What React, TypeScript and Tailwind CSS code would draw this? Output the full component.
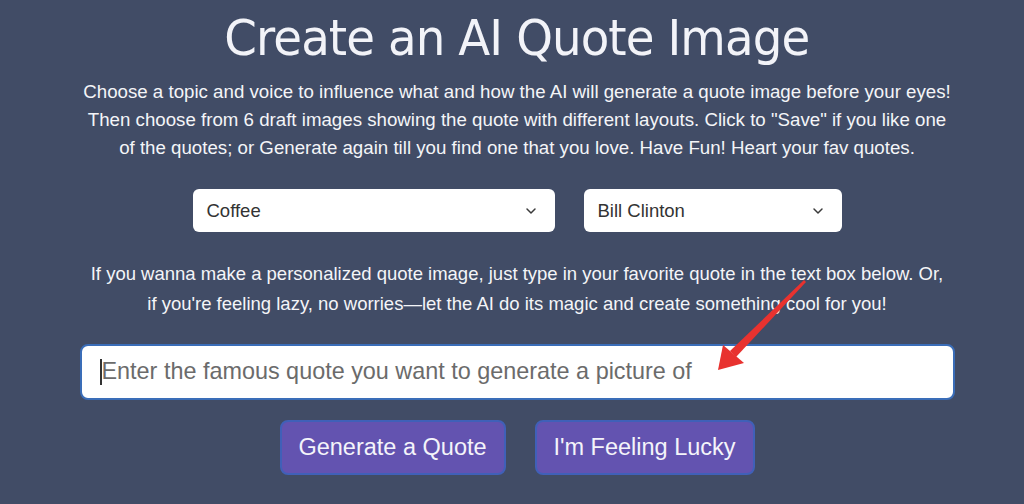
import React from "react";

function Chevron() {
  return (
    <svg width="16" height="16" viewBox="0 0 24 24" fill="none" stroke="#3a3a3a" strokeWidth="2.2" strokeLinecap="round" strokeLinejoin="round">
      <path d="M6 9l6 6 6-6" />
    </svg>
  );
}

function SelectBox({ value, width }: { value: string; width: string }) {
  return (
    <div className={`${width} h-[43px] bg-white rounded-[6px] flex items-center justify-between pl-[14px] pr-[16px]`}>
      <span className="text-[18.5px] text-[#333]">{value}</span>
      <Chevron />
    </div>
  );
}

export default function App() {
  return (
    <div className="relative w-[1024px] h-[504px] bg-[#414c66] overflow-hidden pl-[10px] font-['Liberation_Sans',Arial,sans-serif] text-white flex flex-col items-center">
      <h1 className="mt-[12px] h-[52px] text-[50px] leading-[52px] tracking-[-1px] scale-x-[0.935] text-[#f2f3f8] font-['DejaVu_Sans',sans-serif] whitespace-nowrap">
        Create an AI Quote Image
      </h1>
      <p className="mt-[14px] w-[960px] text-center text-[18.7px] leading-[28px] text-[#f4f5f8] whitespace-nowrap">
        Choose a topic and voice to influence what and how the AI will generate a quote image before your eyes!
        <br />
        Then choose from 6 draft images showing the quote with different layouts. Click to "Save" if you like one
        <br />
        of the quotes; or Generate again till you find one that you love. Have Fun! Heart your fav quotes.
      </p>
      <div className="mt-[27px] flex gap-[29px]">
        <SelectBox value="Coffee" width="w-[362px]" />
        <SelectBox value="Bill Clinton" width="w-[258px]" />
      </div>
      <p className="mt-[27px] w-[960px] text-center text-[18.5px] leading-[30px] text-[#f4f5f8] whitespace-nowrap">
        If you wanna make a personalized quote image, just type in your favorite quote in the text box below. Or,
        <br />
        if you're feeling lazy, no worries—let the AI do its magic and create something cool for you!
      </p>
      <div className="mt-[25px] w-[875px] h-[56px] bg-white rounded-[8px] border-2 border-[#3a6db8] flex items-center pl-[18px]">
        <span className="w-[2px] h-[26px] bg-[#333]" />
        <span className="text-[23.4px] text-[#6b6b6b]">Enter the famous quote you want to generate a picture of</span>
      </div>
      <div className="mt-[20px] flex gap-[29px]">
        <button className="w-[226px] h-[55px] rounded-[8px] bg-[#6353b0] border-2 border-[#4060b8] text-[23.5px] text-[#f4f4fa]">
          Generate a Quote
        </button>
        <button className="w-[220px] h-[55px] rounded-[8px] bg-[#6353b0] border-2 border-[#4060b8] text-[23.5px] text-[#f4f4fa]">
          I'm Feeling Lucky
        </button>
      </div>
      {/* red callout arrow pointing at the quote box */}
      <svg className="absolute left-0 top-0 pointer-events-none" width="1024" height="504">
        <polygon points="804,280 806,282 736,357 730,351" fill="#e8322f" />
        <polygon points="718,370 723,345 744,363" fill="#e8322f" />
      </svg>
    </div>
  );
}
